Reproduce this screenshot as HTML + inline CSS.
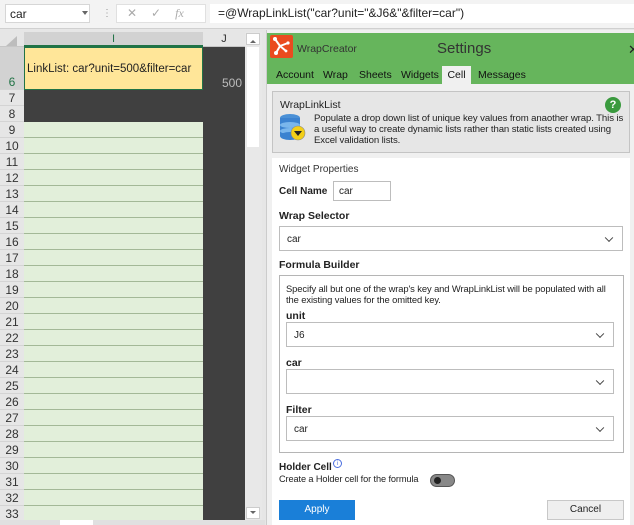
<html><head><style>
*{box-sizing:border-box;margin:0;padding:0}
body{width:634px;height:525px;overflow:hidden;background:#e6e6e6;font-family:"Liberation Sans",sans-serif;position:relative}
.a{position:absolute;white-space:nowrap}
.rh{position:absolute;left:0;width:24px;height:16px;font-size:12px;color:#333;text-align:center;line-height:17px;border-bottom:1px solid #d4d4d4;background:#e6e6e6}
.gc{position:absolute;left:24px;width:179px;height:16px;background:#e2efda;border-bottom:1px solid #a3b897}
.lbl{position:absolute;font-size:10.5px;font-weight:bold;color:#222;white-space:nowrap}
.sel{position:absolute;background:#fff;border:1px solid #bdbdbd;font-size:10px;color:#222;padding-left:7px}
.sel:after{content:"";position:absolute;right:10px;top:50%;width:5px;height:5px;border-right:1.2px solid #444;border-bottom:1.2px solid #444;transform:translateY(-70%) rotate(45deg)}
.tab{position:absolute;top:66px;height:18px;font-size:10.5px;line-height:18px;color:#111}
</style></head><body>
<div class="a" style="left:0;top:0;width:634px;height:29px;background:#f3f3f3;border-bottom:1px solid #d0d0d0"></div>
<div class="a" style="left:5px;top:4px;width:85px;height:19px;background:#fff;border:1px solid #d6d6d6;font-size:12px;padding:2px 4px;color:#222">car<span class="a" style="left:76px;top:6px;border:3px solid transparent;border-top:4px solid #666"></span></div>
<div class="a" style="left:102px;top:8px;color:#999;font-size:10px">⋮</div>
<div class="a" style="left:116px;top:4px;width:90px;height:19px;background:#fff;border:1px solid #e0e0e0;font-size:12px;color:#aaa;padding:1px 10px;letter-spacing:14px">✕✓<i style="font-family:'Liberation Serif';letter-spacing:0">fx</i></div>
<div class="a" style="left:210px;top:4px;width:424px;height:19px;background:#fff;font-size:12px;padding:2px 8px;color:#222">=@WrapLinkList("car?unit="&amp;J6&amp;"&amp;filter=car")</div>
<div class="a" style="left:0;top:32px;width:245px;height:15px;background:#e6e6e6;border-bottom:1px solid #c6c6c6"></div>
<div class="a" style="left:6px;top:36px;border-left:11px solid transparent;border-bottom:10px solid #bdbdbd"></div>
<div class="a" style="left:24px;top:32px;width:179px;height:15px;background:#d2d2d2;border-bottom:2px solid #217346;font-size:11px;text-align:center;line-height:15px;color:#217346">I</div>
<div class="a" style="left:203px;top:32px;width:42px;height:15px;font-size:11px;text-align:center;line-height:15px;color:#333">J</div>
<div class="a" style="left:24px;top:47px;width:221px;height:473px;background:#404040"></div>
<div class="rh" style="top:47px;height:43px;line-height:70px;color:#217346;background:#d2d2d2">6</div>
<div class="a" style="left:24px;top:47px;width:179px;height:43px;background:#ffe699;border:1px solid #217346;font-size:11.5px;color:#222;padding:15px 0 0 2px;overflow:hidden">LinkList: car?unit=500&amp;filter=car</div>
<div class="a" style="left:222px;top:76px;font-size:12px;color:#bbb">500</div>
<div class="rh" style="top:90px">7</div><div class="rh" style="top:106px">8</div>
<div class="rh" style="top:122px">9</div><div class="gc" style="top:122px"></div>
<div class="rh" style="top:138px">10</div><div class="gc" style="top:138px"></div>
<div class="rh" style="top:154px">11</div><div class="gc" style="top:154px"></div>
<div class="rh" style="top:170px">12</div><div class="gc" style="top:170px"></div>
<div class="rh" style="top:186px">13</div><div class="gc" style="top:186px"></div>
<div class="rh" style="top:202px">14</div><div class="gc" style="top:202px"></div>
<div class="rh" style="top:218px">15</div><div class="gc" style="top:218px"></div>
<div class="rh" style="top:234px">16</div><div class="gc" style="top:234px"></div>
<div class="rh" style="top:250px">17</div><div class="gc" style="top:250px"></div>
<div class="rh" style="top:266px">18</div><div class="gc" style="top:266px"></div>
<div class="rh" style="top:282px">19</div><div class="gc" style="top:282px"></div>
<div class="rh" style="top:298px">20</div><div class="gc" style="top:298px"></div>
<div class="rh" style="top:314px">21</div><div class="gc" style="top:314px"></div>
<div class="rh" style="top:330px">22</div><div class="gc" style="top:330px"></div>
<div class="rh" style="top:346px">23</div><div class="gc" style="top:346px"></div>
<div class="rh" style="top:362px">24</div><div class="gc" style="top:362px"></div>
<div class="rh" style="top:378px">25</div><div class="gc" style="top:378px"></div>
<div class="rh" style="top:394px">26</div><div class="gc" style="top:394px"></div>
<div class="rh" style="top:410px">27</div><div class="gc" style="top:410px"></div>
<div class="rh" style="top:426px">28</div><div class="gc" style="top:426px"></div>
<div class="rh" style="top:442px">29</div><div class="gc" style="top:442px"></div>
<div class="rh" style="top:458px">30</div><div class="gc" style="top:458px"></div>
<div class="rh" style="top:474px">31</div><div class="gc" style="top:474px"></div>
<div class="rh" style="top:490px">32</div><div class="gc" style="top:490px"></div>
<div class="rh" style="top:506px">33</div><div class="gc" style="top:506px"></div>
<div class="a" style="left:0;top:520px;width:265px;height:5px;background:#e0e0e0"></div>
<div class="a" style="left:60px;top:520px;width:33px;height:5px;background:#fff"></div>
<div class="a" style="left:245px;top:32px;width:17px;height:488px;background:#e8e8e8"></div>
<div class="a" style="left:246px;top:33px;width:14px;height:12px;background:#fff;border:1px solid #ccc"></div>
<div class="a" style="left:250px;top:37px;border:3px solid transparent;border-bottom:3px solid #666"></div>
<div class="a" style="left:247px;top:47px;width:12px;height:100px;background:#fff"></div>
<div class="a" style="left:246px;top:507px;width:14px;height:12px;background:#fff;border:1px solid #ccc"></div>
<div class="a" style="left:250px;top:511px;border:3px solid transparent;border-top:3px solid #666"></div>
<div class="a" style="left:266px;top:30px;width:368px;height:495px;background:#f0f0f0;border-left:1px solid #ccc"></div>
<div class="a" style="left:267px;top:33px;width:367px;height:51px;background:#66b55c"></div>
<div class="a" style="left:270px;top:35px;width:23px;height:23px;background:#ea4b1f;border-radius:2px"><svg width="23" height="23" viewBox="0 0 23 23"><g stroke="#fff" stroke-width="2" fill="#fff"><line x1="5" y1="4" x2="10" y2="11"/><line x1="10" y1="11" x2="6" y2="18"/><line x1="10" y1="11" x2="18" y2="8"/><line x1="10" y1="11" x2="16" y2="16"/><circle cx="5" cy="4" r="2" stroke="none"/><circle cx="6" cy="18" r="2" stroke="none"/><circle cx="18" cy="8" r="1.6" stroke="none"/><circle cx="16" cy="16" r="1.4" stroke="none"/></g></svg></div>
<div class="a" style="left:297px;top:43px;font-size:10.5px;color:#333">WrapCreator</div>
<div class="a" style="left:437px;top:40px;font-size:15px;color:#333">Settings</div>
<div class="a" style="left:628px;top:42px;font-size:13px;color:#222">✕</div>
<div class="tab" style="left:276px">Account</div>
<div class="tab" style="left:323px">Wrap</div>
<div class="tab" style="left:359px">Sheets</div>
<div class="tab" style="left:401px">Widgets</div>
<div class="tab" style="left:442px;width:29px;background:#f0f0f0;text-align:center">Cell</div>
<div class="tab" style="left:478px">Messages</div>
<div class="a" style="left:272px;top:91px;width:358px;height:62px;background:#e6e6e6;border:1px solid #c4c4c4"></div>
<div class="a" style="left:280px;top:99px;font-size:10.5px;color:#222">WrapLinkList</div>
<div class="a" style="left:605px;top:97px;width:16px;height:16px;border-radius:50%;background:#3a9a3e;color:#fff;font-size:11px;font-weight:bold;text-align:center;line-height:16px">?</div>
<svg class="a" style="left:279px;top:113px" width="30" height="28"><ellipse cx="11" cy="5" rx="10" ry="4" fill="#4a90d6"/><rect x="1" y="5" width="20" height="18" fill="#3b82d0"/><ellipse cx="11" cy="12" rx="10" ry="3" fill="#7ab6ec"/><ellipse cx="11" cy="18" rx="10" ry="3" fill="#7ab6ec"/><ellipse cx="11" cy="23" rx="10" ry="4" fill="#3b82d0"/><circle cx="19" cy="20" r="7" fill="#f3cf18" stroke="#888" stroke-width=".6"/><polygon points="15,18 23,18 19,23" fill="#222"/></svg>
<div class="a" style="left:314px;top:113px;width:314px;white-space:normal;font-size:9.6px;line-height:11px;color:#222;letter-spacing:-0.1px">Populate a drop down list of unique key values from anaother wrap. This is a useful way to create dynamic lists rather than static lists created using Excel validation lists.</div>
<div class="a" style="left:272px;top:158px;width:358px;height:367px;background:#fff"></div>
<div class="a" style="left:279px;top:164px;font-size:10px;color:#333">Widget Properties</div>
<div class="lbl" style="left:279px;top:186px;font-size:10px">Cell Name</div>
<div class="a" style="left:333px;top:181px;width:58px;height:20px;border:1px solid #bdbdbd;font-size:10px;padding:4px 5px;color:#222;background:#fff">car</div>
<div class="lbl" style="left:279px;top:210px">Wrap Selector</div>
<div class="sel" style="left:279px;top:226px;width:344px;height:25px;line-height:25px">car</div>
<div class="lbl" style="left:279px;top:259px">Formula Builder</div>
<div class="a" style="left:279px;top:275px;width:345px;height:178px;border:1px solid #b5b5b5"></div>
<div class="a" style="left:286px;top:283px;width:334px;white-space:normal;font-size:9.4px;line-height:11px;color:#222;letter-spacing:-0.1px">Specify all but one of the wrap's key and WrapLinkList will be populated with all the existing values for the omitted key.</div>
<div class="lbl" style="left:286px;top:310px">unit</div>
<div class="sel" style="left:286px;top:322px;width:328px;height:25px;line-height:25px">J6</div>
<div class="lbl" style="left:286px;top:357px">car</div>
<div class="sel" style="left:286px;top:369px;width:328px;height:25px"></div>
<div class="lbl" style="left:286px;top:404px">Filter</div>
<div class="sel" style="left:286px;top:416px;width:328px;height:25px;line-height:25px">car</div>
<div class="lbl" style="left:279px;top:462px;font-size:10px">Holder Cell</div>
<div class="a" style="left:333px;top:459px;width:9px;height:9px;border:1px solid #4b6fe0;border-radius:50%;font-size:6px;color:#4b6fe0;text-align:center;line-height:8px">i</div>
<div class="a" style="left:279px;top:474px;font-size:9.2px;color:#222;letter-spacing:-0.1px">Create a Holder cell for the formula</div>
<div class="a" style="left:430px;top:474px;width:25px;height:13px;border-radius:7px;background:#888;border:1px solid #555"><div class="a" style="left:3px;top:2px;width:7px;height:7px;border-radius:50%;background:#222"></div></div>
<div class="a" style="left:279px;top:500px;width:76px;height:20px;background:#1a7fd8;color:#fff;font-size:10px;text-align:center;line-height:20px">Apply</div>
<div class="a" style="left:547px;top:500px;width:77px;height:20px;background:#efefef;border:1px solid #c8c8c8;color:#222;font-size:10px;text-align:center;line-height:18px">Cancel</div>
</body></html>
